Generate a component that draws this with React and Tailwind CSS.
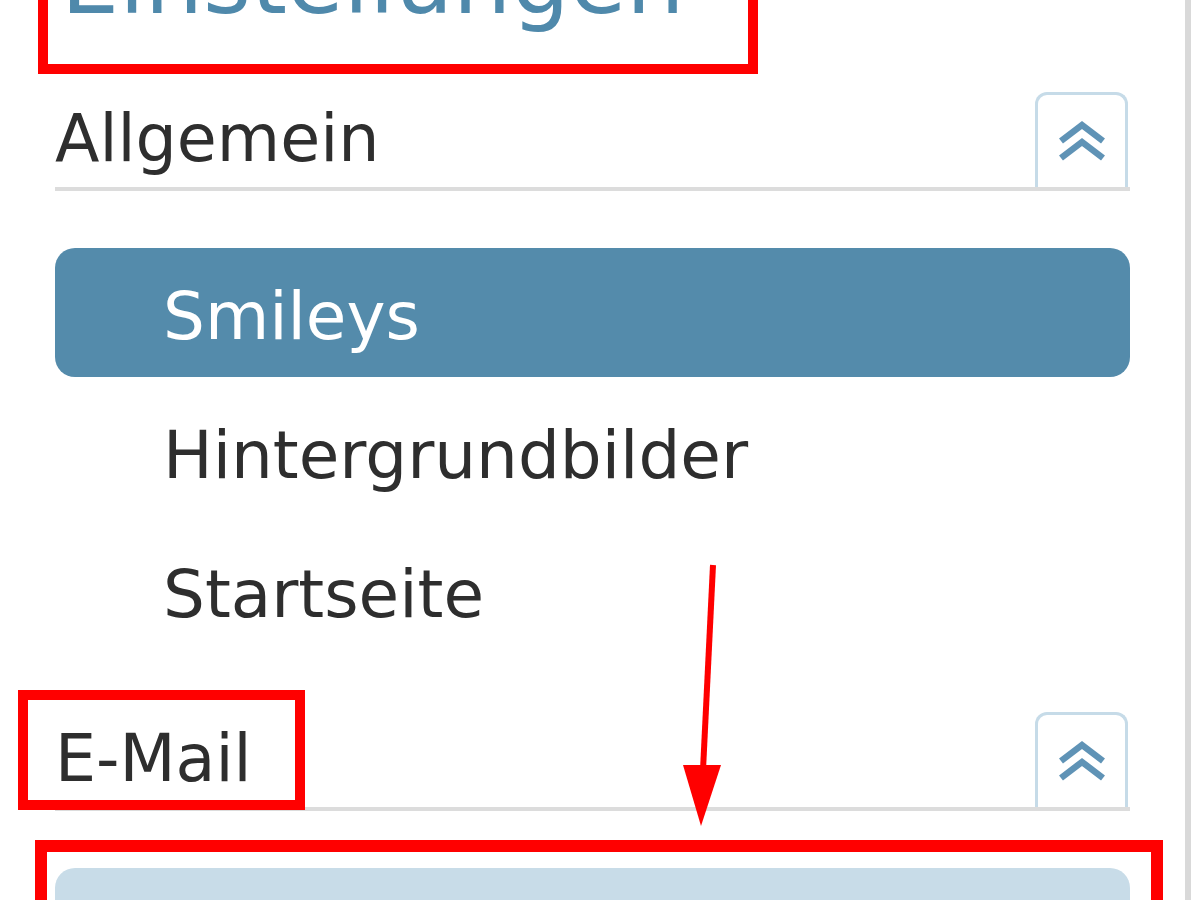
import React from "react";

function Chevrons() {
  return (
    <svg width="50" height="42" viewBox="0 0 50 42" fill="none">
      <polyline points="4,21 25,5 46,21" stroke="#5f93b6" strokeWidth="6.5" strokeLinejoin="miter" />
      <polyline points="4,38 25,22 46,38" stroke="#5f93b6" strokeWidth="6.5" strokeLinejoin="miter" />
    </svg>
  );
}

function SectionHeader({ title }) {
  return (
    <div className="flex items-end justify-between border-b-4 border-[#dcdcdc] h-[99px]">
      <div className="text-[65px] leading-none text-[#2e2e2e] pb-[16px]">{title}</div>
      <div className="w-[93px] h-[95px] mr-[2px] border-[3px] border-b-0 border-[#c6dbe8] rounded-t-[12px] flex items-center justify-center">
        <Chevrons />
      </div>
    </div>
  );
}

function Item({ label, active }) {
  return (
    <div
      className={
        "h-[129px] shrink-0 flex items-center pl-[108px] pt-[8px] rounded-[20px] text-[66px] leading-none " +
        (active ? "bg-[#548bab] text-white" : "text-[#2e2e2e]")
      }
    >
      {label}
    </div>
  );
}

export default function App() {
  return (
    <div className="relative w-[1200px] h-[900px] overflow-hidden bg-white" style={{ fontFamily: '"DejaVu Sans", Verdana, sans-serif' }}>
      <div className="flex flex-col w-[1191px] h-[900px] border-r-[6px] border-[#d9d9d9] pl-[55px] pr-[55px]">
        <div className="shrink-0 text-[92px] leading-none text-[#4f89ab] mt-[-64px] ml-[6px] h-[156px]">Einstellungen</div>
        <SectionHeader title="Allgemein" />
        <div className="mt-[57px] flex flex-col gap-[10px]">
          <Item label="Smileys" active />
          <Item label="Hintergrundbilder" />
          <Item label="Startseite" />
        </div>
        <div className="mt-[57px]">
          <SectionHeader title="E-Mail" />
        </div>
        <div className="mt-[57px] h-[129px] shrink-0 rounded-[20px] bg-[#c8dce8]" />
      </div>

      {/* annotations */}
      <div className="absolute left-[38px] top-[-20px] w-[720px] h-[94px] border-[10px] border-[#ff0000]" />
      <div className="absolute left-[18px] top-[690px] w-[287px] h-[120px] border-[10px] border-[#ff0000]" />
      <div className="absolute left-[35px] top-[840px] w-[1128px] h-[120px] border-[12px] border-[#ff0000]" />
      <svg className="absolute left-0 top-0" width="1200" height="900" viewBox="0 0 1200 900">
        <line x1="713" y1="565" x2="703" y2="770" stroke="#ff0000" strokeWidth="6" />
        <polygon points="683,765 721,765 701,826" fill="#ff0000" />
      </svg>
    </div>
  );
}
